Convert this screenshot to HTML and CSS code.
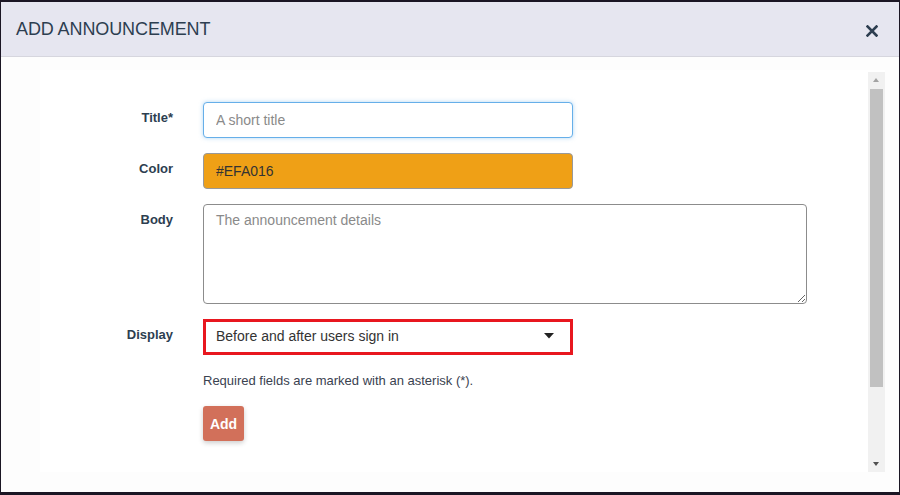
FILE: index.html
```html
<!DOCTYPE html>
<html>
<head>
<meta charset="utf-8">
<link rel="stylesheet" href="styles.css">
</head>
<body>
<div class="modal">
  <div class="modal-header">
    <h2 class="modal-title">ADD ANNOUNCEMENT</h2>
    <button class="close" aria-label="Close">
      <svg width="12" height="12" viewBox="0 0 12 12"><path d="M1.5 1.5 L10.5 10.5 M10.5 1.5 L1.5 10.5" stroke="#2d3e50" stroke-width="2.6" stroke-linecap="square"/></svg>
    </button>
  </div>
  <div class="modal-body">
    <div class="scroller">
      <form class="form">
        <label class="lbl">Title*</label>
        <div class="field"><input class="input focus" placeholder="A short title"></div>
        <label class="lbl">Color</label>
        <div class="field"><input class="input color" value="#EFA016"></div>
        <label class="lbl">Body</label>
        <div class="field"><textarea class="textarea" placeholder="The announcement details"></textarea></div>
        <label class="lbl">Display</label>
        <div class="field">
          <div class="select">
            <span>Before and after users sign in</span>
            <svg width="10" height="6" viewBox="0 0 10 6"><path d="M0 0 H10 L5 5.5 Z" fill="#222"/></svg>
          </div>
        </div>
        <div></div>
        <div class="help">Required fields are marked with an asterisk (*).</div>
        <div></div>
        <div class="actions"><button type="button" class="btn">Add</button></div>
      </form>
      <div class="scrollbar">
        <div class="arrow up"></div>
        <div class="track"><div class="thumb"></div></div>
        <div class="arrow down"></div>
      </div>
    </div>
  </div>
</div>
</body>
</html>
```
FILE: styles.css
```css
html, body { margin: 0; padding: 0; }
body {
  width: 900px; height: 495px; overflow: hidden;
  background: #1b1624;
  font-family: "Liberation Sans", Arial, sans-serif;
}
.modal {
  margin: 2px 1px 0 1px;
  width: 898px; height: 490px;
  background: #fdfdfd;
  display: flex; flex-direction: column;
}
.modal-header {
  height: 54px;
  background: #e6e6f0;
  border-bottom: 1px solid #d6d6de;
  display: flex; align-items: center; justify-content: space-between;
  padding: 0 21px 0 15px;
}
.modal-title {
  margin: 0; font-weight: normal; font-size: 18px; color: #2d3e50;
  letter-spacing: -0.1px;
}
.close { border: 0; background: none; padding: 0; margin-top: 4px; display: flex; }
.modal-body {
  flex: 1;
  padding: 13px 14px 20px 39px;
  display: flex;
}
.scroller {
  flex: 1; background: #fff; display: flex;
}
.form {
  flex: 1;
  display: grid;
  grid-template-columns: 133px 1fr;
  column-gap: 30px;
  row-gap: 15px;
  align-content: start;
  padding-top: 32px;
}
.lbl {
  text-align: right; font-weight: bold; font-size: 13px; color: #2d3e50;
  padding-top: 8px; line-height: 15px;
}
.input {
  box-sizing: border-box; width: 370px; height: 36px;
  border: 1px solid #8c8c8c; border-radius: 4px;
  padding: 0 12px; font: 14px "Liberation Sans", Arial, sans-serif; color: #333;
  outline: none; display: block;
}
.input::placeholder, .textarea::placeholder { color: #8a8a8a; }
.input.focus { border-color: #66afe9; box-shadow: 0 0 4px rgba(102,175,233,.5); }
.input.color { background: #efa016; border-color: #999; color: #333; }
.textarea {
  box-sizing: border-box; width: 604px; height: 100px; display: block;
  border: 1px solid #8c8c8c; border-radius: 4px; padding: 7px 12px;
  font: 14px "Liberation Sans", Arial, sans-serif; color: #333; resize: vertical; outline: none;
}
.select {
  box-sizing: border-box; width: 370px; height: 36px;
  border: 3px solid #e8171f;
  display: flex; align-items: center; justify-content: space-between;
  padding: 0 16px 2px 10px; font-size: 14px; color: #333;
}
.help { font-size: 13px; color: #3a4250; padding-top: 3px; }
.actions { padding-top: 3px; }
.btn {
  border: 0; border-radius: 3px; background: #d2705a; color: #fff;
  font: bold 14px "Liberation Sans", Arial, sans-serif;
  width: 41px; height: 35px; padding: 0;
  box-shadow: 0 2px 5px rgba(0,0,0,.2);
}
.scrollbar {
  width: 17px; background: #f1f1f1; display: flex; flex-direction: column; margin-top: 2px;
}
.arrow { height: 17px; position: relative; }
.arrow::after {
  content: ""; position: absolute; left: 5px; border-left: 3.5px solid transparent; border-right: 3.5px solid transparent;
}
.arrow.up::after { top: 6px; border-bottom: 4px solid #a3a3a3; }
.arrow.down::after { top: 7px; border-top: 4px solid #505050; }
.track { flex: 1; padding: 0 2px; }
.thumb { height: 298px; background: #c1c1c1; }
```
